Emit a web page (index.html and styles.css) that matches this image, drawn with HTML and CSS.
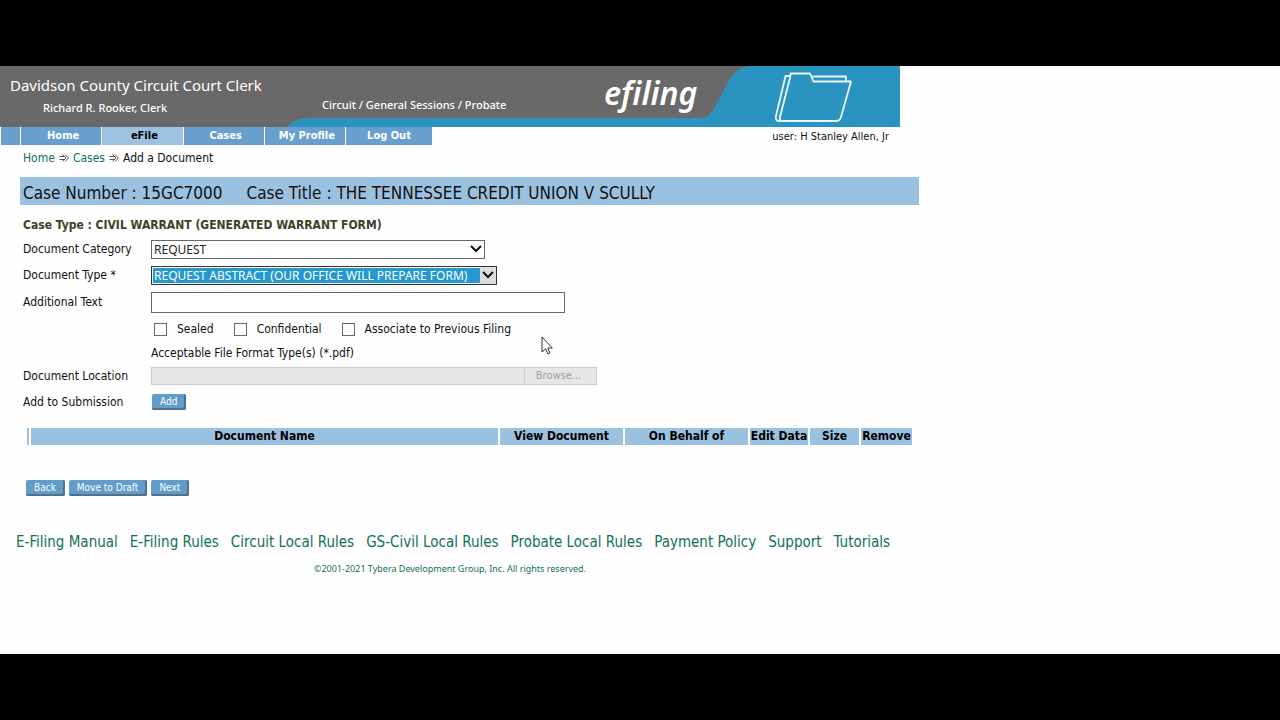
FILE: index.html
```html
<!DOCTYPE html>
<html lang="en">
<head>
<meta charset="utf-8">
<title>Add a Document - efiling</title>
<link rel="stylesheet" href="styles.css">
</head>
<body>
<svg class="defs" aria-hidden="true">
  <symbol id="crumb-arrow" viewBox="0 0 10 8">
    <path d="M0.500 2.500H5.500M0.500 5.500H5.500M3.500 0.500L7 4L3.500 7.500M6 0.500L9.500 4L6 7.500" fill="none" stroke="#555" stroke-width="1"/>
  </symbol>
  <symbol id="chevron" viewBox="0 0 12 8">
    <path d="M1 1L6 6L11 1" fill="none" stroke="#111" stroke-width="2"/>
  </symbol>
</svg>
<div class="page">
  <header class="banner">
    <svg class="banner-art" viewBox="0 0 900 61" preserveAspectRatio="none" aria-hidden="true">
      <rect width="900" height="61" fill="#2b93bf"/>
      <path d="M0 0H753C740 0 734 6 728 16L717 37C712 48 708 52 700 52H307C297 53 292 56 287 61H0Z" fill="#696969"/>
    </svg>
    <div class="clerk">
      <h1 class="court">Davidson County Circuit Court Clerk</h1>
      <p class="clerk-name">Richard R. Rooker, Clerk</p>
    </div>
    <p class="divisions">Circuit / General Sessions / Probate</p>
    <p class="brand">efiling</p>
    <svg class="folder" viewBox="0 0 80 52" aria-hidden="true">
      <path d="M8 50H62Q66 50 67 46L77 10.500H39.500L36 2.500H16.500V5L6 46Q5.500 50 8 50 M16 5H11.500L2 45Q1 50 5 50H10 M38.500 5.500H72V10.500" fill="none" stroke="#e9f7fc" stroke-width="1.800" stroke-linejoin="round"/>
    </svg>
  </header>
  <div class="topbar">
    <nav class="nav">
      <span class="nav-stub"></span>
      <a href="#">Home</a>
      <a href="#" class="current">eFile</a>
      <a href="#">Cases</a>
      <a href="#">My Profile</a>
      <a href="#" class="last">Log Out</a>
    </nav>
    <p class="user">user: H Stanley Allen, Jr</p>
  </div>
  <main class="content">
    <div class="crumbs">
      <a href="#">Home</a>
      <svg class="crumb-arrow"><use href="#crumb-arrow"/></svg>
      <a href="#">Cases</a>
      <svg class="crumb-arrow"><use href="#crumb-arrow"/></svg>
      <span>Add a Document</span>
    </div>
    <h2 class="case-bar"><span>Case Number : 15GC7000</span><span>Case Title : THE TENNESSEE CREDIT UNION V SCULLY</span></h2>
    <p class="case-type">Case Type : CIVIL WARRANT (GENERATED WARRANT FORM)</p>
    <form class="form">
      <div class="row">
        <label for="category">Document Category</label>
        <div class="select category">
          <select id="category"><option>REQUEST</option></select>
          <span class="toggle"><svg><use href="#chevron"/></svg></span>
        </div>
      </div>
      <div class="row">
        <label for="type">Document Type *</label>
        <div class="select type">
          <select id="type"><option>REQUEST ABSTRACT (OUR OFFICE WILL PREPARE FORM)</option></select>
          <span class="toggle"><svg><use href="#chevron"/></svg></span>
        </div>
      </div>
      <div class="row extra">
        <label for="extra">Additional Text</label>
        <input class="text" id="extra" type="text">
      </div>
      <div class="row checks">
        <label><input type="checkbox">Sealed</label>
        <label><input type="checkbox">Confidential</label>
        <label><input type="checkbox">Associate to Previous Filing</label>
      </div>
      <p class="row hint">Acceptable File Format Type(s) (*.pdf)</p>
      <div class="row">
        <label for="location">Document Location</label>
        <div class="file">
          <input id="location" type="text" disabled>
          <button type="button" disabled>Browse...</button>
        </div>
      </div>
      <div class="row">
        <label for="add">Add to Submission</label>
        <button class="btn add" id="add" type="button">Add</button>
      </div>
    </form>
    <table class="docs">
      <colgroup><col class="c-mark"><col><col class="c-view"><col class="c-behalf"><col class="c-edit"><col class="c-size"><col class="c-remove"></colgroup>
      <thead>
        <tr><th></th><th>Document Name</th><th>View Document</th><th>On Behalf of</th><th>Edit Data</th><th>Size</th><th>Remove</th></tr>
      </thead>
    </table>
    <div class="actions">
      <button class="btn" type="button">Back</button>
      <button class="btn" type="button">Move to Draft</button>
      <button class="btn" type="button">Next</button>
    </div>
  </main>
  <footer class="footer">
    <nav class="links">
      <a href="#">E-Filing Manual</a>
      <a href="#">E-Filing Rules</a>
      <a href="#">Circuit Local Rules</a>
      <a href="#">GS-Civil Local Rules</a>
      <a href="#">Probate Local Rules</a>
      <a href="#">Payment Policy</a>
      <a href="#">Support</a>
      <a href="#">Tutorials</a>
    </nav>
    <p class="copyright">©2001-2021 Tybera Development Group, Inc. All rights reserved.</p>
  </footer>
  <svg class="pointer" viewBox="0 0 12 19" aria-hidden="true">
    <path d="M1 1V16L4.500 12.800L7 18L9 17L6.800 12H11.300Z" fill="#fff" stroke="#333" stroke-width="1"/>
  </svg>
</div>
</body>
</html>
```
FILE: styles.css
```css
* { box-sizing: border-box; }

body {
  margin: 0;
  min-height: 100vh;
  padding: 66px 0;
  display: flex;
  flex-direction: column;
  background: #000;
  color: #111;
  font: 12px/16px "DejaVu Sans Condensed", "DejaVu Sans", sans-serif;
}

h1, h2, p { margin: 0; font-weight: 400; }
a { color: #0f7350; text-decoration: none; white-space: nowrap; }
button, input, select { font: inherit; margin: 0; }
.defs { position: absolute; width: 0; height: 0; }

.page {
  position: relative;
  flex: 1;
  background: #fefefe;
}

/* Banner */
.banner {
  position: relative;
  display: flex;
  max-width: 900px;
  min-height: 61px;
  padding-left: 10px;
  color: #fff;
  font-family: "Noto Sans", sans-serif;
}
.banner > * { position: relative; }
.banner > .banner-art {
  position: absolute;
  inset: 0;
  width: 100%;
  height: 100%;
}
.clerk { width: 312px; padding-top: 9px; }
.court { font-size: 15px; line-height: 20px; }
.clerk-name { padding: 5px 0 0 33px; font-size: 11px; font-weight: 500; }
.divisions { width: 282px; padding-top: 31px; font-size: 11px; font-weight: 500; }
.brand { width: 170px; padding-top: 7px; font: italic 600 32px/40px "Noto Sans", sans-serif; }
.folder { width: 80px; height: 52px; margin-top: 5px; }

/* Navigation */
.topbar {
  display: flex;
  justify-content: space-between;
  max-width: 889px;
  padding-left: 1px;
}
.nav { display: flex; gap: 1px; width: 431px; height: 18px; }
.nav a, .nav-stub { background: #689fce; }
.nav-stub { width: 19px; }
.nav a {
  flex: 1;
  padding-left: 4px;
  color: #fff;
  font-weight: 700;
  font-size: 11px;
  line-height: 18px;
  text-align: center;
}
.nav a.current { background: #9dc2e1; color: #000; }
.nav a.last { flex: none; width: 86px; padding: 0; }
.user { padding-top: 2px; font-size: 11px; }

/* Case */
.content { max-width: 919px; padding-left: 20px; }
.crumbs {
  display: flex;
  align-items: center;
  gap: 4px;
  padding: 5px 3px 11px;
}
.crumb-arrow { width: 10px; height: 8px; }
.case-bar {
  display: flex;
  gap: 24px;
  padding: 4px 3px 0;
  background: #9bc1e1;
  font-size: 17px;
  line-height: 24px;
}
.case-type {
  padding: 12px 3px 3px;
  color: #3d4225;
  font-weight: 700;
}

/* Form */
.form { padding-left: 3px; }
.row {
  display: grid;
  grid-template-columns: 128px 1fr;
  align-items: center;
  min-height: 26px;
}
.row.extra { min-height: 28px; }
.select { position: relative; height: 19px; border: 1px solid #666; }
.select select {
  width: 100%;
  height: 17px;
  padding: 0 0 0 2px;
  border: 0;
  background: #fff;
  appearance: none;
  font-family: "Noto Sans", sans-serif;
  line-height: 17px;
  color: #222;
}
.category { width: 334px; }
.type { width: 346px; padding: 1px; border-color: #333; }
.type select { display: block; height: 15px; line-height: 15px; padding: 0 0 0 1px; background: #2498cf; color: #fff; }
.toggle {
  position: absolute;
  top: 0;
  right: 0;
  display: grid;
  place-items: center;
  width: 16px;
  height: 17px;
  pointer-events: none;
}
.type .toggle { background: #ddd; }
.toggle svg { width: 12px; height: 8px; }
.text { width: 414px; height: 21px; padding: 0 3px; border: 1px solid #666; background: #fff; }
.row.checks { display: flex; padding-left: 131px; gap: 20px; }
.checks label { display: flex; align-items: center; gap: 10px; }
.checks input {
  width: 13px;
  height: 13px;
  border: 1px solid #666;
  background: #fff;
  appearance: none;
}
.row.hint { display: block; min-height: 21px; padding: 3px 0 0 128px; }
.file { display: flex; width: 446px; height: 18px; }
.file input {
  flex: 1;
  min-width: 0;
  border: 1px solid #ccc;
  background: #e5e5e5;
}
.file button {
  width: 72px;
  padding: 0 4px 0 0;
  border: 1px solid #ccc;
  border-left: 0;
  background: #e5e5e5;
  color: #a0a0a0;
  font-size: 11px;
  line-height: 16px;
}
.btn {
  height: 16px;
  padding: 0 9px 0 8px;
  border: 0;
  border-radius: 2px;
  background: #629dc9;
  box-shadow: inset -2px -2px 0 #50708c;
  color: #fff;
  font-size: 10px;
  line-height: 14px;
}
.add { justify-self: start; margin-left: 1px; }

/* Documents */
.docs {
  width: 889px;
  max-width: 100%;
  margin: 11px 0 0 5px;
  border-spacing: 2px;
  table-layout: fixed;
}
.docs th {
  height: 17px;
  padding: 0;
  background: #9bc1e1;
  color: #000;
  line-height: 17px;
  white-space: nowrap;
}
.c-mark { width: 2px; }
.c-view { width: 123px; }
.c-behalf { width: 123px; }
.c-edit { width: 58px; }
.c-size { width: 49px; }
.c-remove { width: 51px; }
.actions { display: flex; gap: 4px; padding: 33px 6px 0; }

/* Footer */
.footer { max-width: 900px; padding-top: 34px; }
.links { display: flex; gap: 12px; padding-left: 16px; font-size: 15px; line-height: 24px; }
.copyright {
  padding-top: 7px;
  color: #0f7350;
  font-family: "Noto Sans", sans-serif;
  font-size: 9px;
  text-align: center;
}

.pointer { position: absolute; left: 541px; top: 270px; width: 12px; height: 19px; }
```
